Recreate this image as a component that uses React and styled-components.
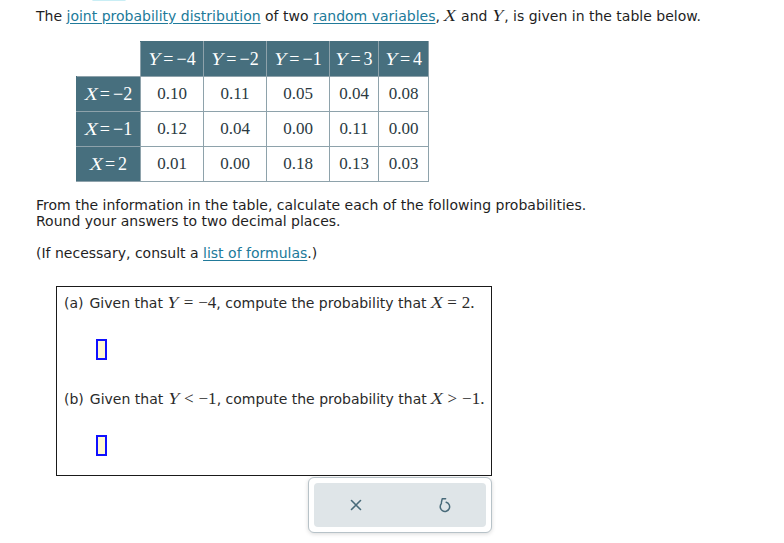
import React from "react";
import styled, { createGlobalStyle } from "styled-components";

const Global = createGlobalStyle`
  html, body { margin: 0; padding: 0; background: #fff; }
  body { font-family: "DejaVu Sans", Verdana, sans-serif; color: #1f1f1f; }
`;

const Page = styled.div`
  position: relative;
  padding: 8px 0 0 36px;
  width: 784px;
  height: 543px;
  box-sizing: border-box;
  overflow: hidden;
`;

const TopSliver = styled.div`
  position: absolute;
  left: 92px;
  top: -2px;
  width: 34px;
  height: 3px;
  border-radius: 2px;
  background: #c9eef5;
`;

const Para = styled.p`
  margin: ${(p) => p.$m || "0"};
  font-size: 14px;
  line-height: 16px;
  color: #1f1f1f;
`;

const Link = styled.a`
  color: #217a9a;
  text-decoration: underline;
  text-underline-offset: 2px;
`;

const Slant = styled.span`
  display: inline-block;
  font-style: normal;
  transform: skewX(-13deg);
`;

const MathV = styled(Slant)`
  font-family: "Liberation Serif", "DejaVu Serif", serif;
  font-size: 17px;
`;

const MathN = styled.span`
  font-family: "Liberation Serif", "DejaVu Serif", serif;
  font-size: 17px;
`;

const Table = styled.table`
  margin: 17px 0 0 40px;
  border-collapse: collapse;
  table-layout: fixed;
  font-family: "Liberation Serif", "DejaVu Serif", serif;
  font-size: 17px;
`;

const Corner = styled.td`
  border: none;
  padding: 0;
`;

const HeadCell = styled.th`
  background: #476f7e;
  color: #fff;
  font-weight: normal;
  font-size: 18px;
  height: 34px;
  padding: 0;
  border: 1px solid #8ea2ab;
  border-top-color: #476f7e;
  text-align: center;
  white-space: nowrap;
`;

const RowHead = styled.th`
  background: #476f7e;
  color: #fff;
  font-weight: normal;
  font-size: 18px;
  height: 34px;
  padding: 0;
  border: 1px solid #8ea2ab;
  border-left-color: #476f7e;
  text-align: center;
  white-space: nowrap;
`;

const Cell = styled.td`
  border: 1px solid #8ea2ab;
  color: #2b3a42;
  text-align: center;
  padding: 0;
  height: 34px;
`;

const Eq = styled.span`
  margin: 0 ${(p) => p.$s || 5}px 0 ${(p) => p.$l ?? p.$s ?? 4}px;
`;

const Box = styled.div`
  margin: 25px 0 0 20px;
  width: 436px;
  height: 190px;
  box-sizing: border-box;
  border: 1px solid #1a1a1a;
  padding: 8px 0 0 7px;
  display: flex;
  flex-direction: column;
`;

const Question = styled.div`
  margin-top: ${(p) => p.$mt || 0}px;
  font-size: 14px;
  line-height: 16px;
  color: #2a2a2a;
  white-space: nowrap;
`;

const Label = styled.span`
  margin-right: 6px;
`;

const Input = styled.div`
  margin: 28px 0 0 32px;
  width: 7px;
  height: 17px;
  border: 2px solid #1010ff;
  background: #fff9d2;
`;

const Panel = styled.div`
  margin: 1px 0 0 272px;
  width: 184px;
  height: 56px;
  box-sizing: border-box;
  border: 1px solid #b7c2c8;
  border-radius: 6px;
  background: #fff;
  box-shadow: 0 1px 4px rgba(0, 0, 0, 0.15);
  padding: 5px;
`;

const PanelInner = styled.div`
  height: 100%;
  border-radius: 4px;
  background: #dfe5e8;
  display: grid;
  grid-template-columns: 1fr 1fr;
  align-items: center;
  justify-items: center;
`;

const IconBtn = styled.span`
  display: flex;
  color: #486a79;
  transform: translateX(${(p) => p.$dx || 0}px);
`;

const XIcon = () => (
  <svg width="14" height="14" viewBox="0 0 14 14" fill="none" stroke="currentColor" strokeWidth="1.6" strokeLinecap="round">
    <path d="M2.5 2.5 L11.5 11.5 M11.5 2.5 L2.5 11.5" />
  </svg>
);

const UndoIcon = () => (
  <svg width="16" height="16" viewBox="0 0 16 16" fill="none" stroke="currentColor" strokeWidth="1.5" strokeLinecap="round" strokeLinejoin="round">
    <path d="M8.6 1.8 L5.2 1.8 L4.4 5.4" />
    <path d="M4.4 6.6 A4.7 4.7 0 1 0 9.2 5.2" />
  </svg>
);

const cols = [
  ["\u22124", 63],
  ["\u22122", 63],
  ["\u22121", 63],
  ["3", 49],
  ["4", 50],
];

const rows = [
  ["\u22122", ["0.10", "0.11", "0.05", "0.04", "0.08"]],
  ["\u22121", ["0.12", "0.04", "0.00", "0.11", "0.00"]],
  ["2", ["0.01", "0.00", "0.18", "0.13", "0.03"]],
];

export default function App() {
  return (
    <>
      <Global />
      <Page>
        <TopSliver />
        <Para>
          The <Link>joint probability distribution</Link> of two{" "}
          <Link>random variables</Link>, <MathV>X</MathV> and <MathV>Y</MathV>, is given in the table below.
        </Para>
        <Table>
          <colgroup>
            <col style={{ width: 64 }} />
            {cols.map(([v, w]) => (
              <col key={v} style={{ width: w }} />
            ))}
          </colgroup>
          <thead>
            <tr>
              <Corner />
              {cols.map(([v]) => (
                <HeadCell key={v}>
                  <Slant>Y</Slant>
                  <Eq $s={3} $l={2}>=</Eq>
                  {v}
                </HeadCell>
              ))}
            </tr>
          </thead>
          <tbody>
            {rows.map(([x, vals]) => (
              <tr key={x}>
                <RowHead>
                  <Slant>X</Slant>
                  <Eq $s={3} $l={2}>=</Eq>
                  {x}
                </RowHead>
                {vals.map((v, i) => (
                  <Cell key={i}>{v}</Cell>
                ))}
              </tr>
            ))}
          </tbody>
        </Table>
        <Para $m="15px 0 0 0">
          From the information in the table, calculate each of the following probabilities.
          <br />
          Round your answers to two decimal places.
        </Para>
        <Para $m="16px 0 0 0">
          (If necessary, consult a <Link>list of formulas</Link>.)
        </Para>
        <Box>
          <Question>
            <Label>(a)</Label>Given that <MathV>Y</MathV>
            <MathN><Eq>=</Eq>−4</MathN>, compute the probability that <MathV>X</MathV>
            <MathN><Eq>=</Eq>2.</MathN>
          </Question>
          <Input />
          <Question $mt={31}>
            <Label>(b)</Label>Given that <MathV>Y</MathV>
            <MathN><Eq>&lt;</Eq>−1</MathN>, compute the probability that <MathV>X</MathV>
            <MathN><Eq>&gt;</Eq>−1.</MathN>
          </Question>
          <Input />
        </Box>
        <Panel>
          <PanelInner>
            <IconBtn $dx={-1}>
              <XIcon />
            </IconBtn>
            <IconBtn $dx={2}>
              <UndoIcon />
            </IconBtn>
          </PanelInner>
        </Panel>
      </Page>
    </>
  );
}
